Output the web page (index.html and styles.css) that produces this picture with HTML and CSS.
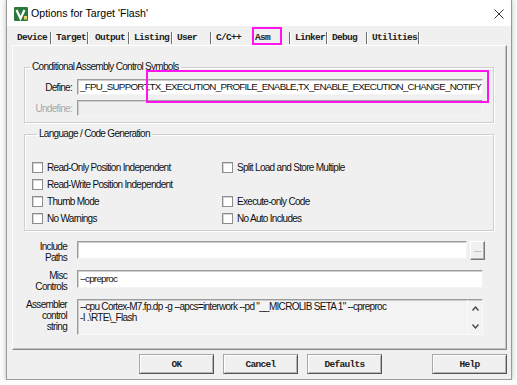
FILE: index.html
```html
<!DOCTYPE html>
<html lang="en">
<head>
  <meta charset="UTF-8" />
  <title>Options for Target 'Flash'</title>
  <link rel="stylesheet" href="styles.css">
</head>
<body>

  <div class="window">
    <div class="titlebar">
      <svg class="app-icon" width="14" height="14" viewBox="0 0 14 14">
        <rect width="14" height="14" rx="1" fill="#2b7a3b"/>
        <path d="M2.5 3 L6.5 11.5 L10.5 3" stroke="#fff" stroke-width="2.2" fill="none"/>
        <rect x="10" y="9" width="3" height="3.5" fill="#e9d36a"/>
      </svg>
      <span class="title">Options for Target 'Flash'</span>
      <svg class="close" width="10" height="10" viewBox="0 0 10 10">
        <path d="M0.5 0.5 L9.5 9.5 M9.5 0.5 L0.5 9.5" stroke="#333" stroke-width="1" fill="none"/>
      </svg>
    </div>

    <div class="tabs">
      <span class="tab">Device</span>
      <span class="tab">Target</span>
      <span class="tab tab-wide">Output</span>
      <span class="tab">Listing</span>
      <span class="tab">User</span>
      <span class="tab tab-plain">C/C++</span>
      <span class="tab tab-active">Asm<span class="mark mark-tab"></span></span>
      <span class="tab">Linker</span>
      <span class="tab">Debug</span>
      <span class="tab">Utilities</span>
    </div>

    <div class="page">
      <fieldset class="group group-symbols">
        <legend>Conditional Assembly Control Symbols</legend>
        <div class="field-row">
          <span class="field-label">Define:</span>
          <div class="input">_FPU_SUPPORT,TX_EXECUTION_PROFILE_ENABLE,TX_ENABLE_EXECUTION_CHANGE_NOTIFY</div>
        </div>
        <div class="field-row disabled">
          <span class="field-label">Undefine:</span>
          <div class="input"></div>
        </div>
      </fieldset>

      <fieldset class="group group-lang">
        <legend>Language / Code Generation</legend>
        <div class="checks">
          <label class="check"><span class="box"></span>Read-Only Position Independent</label>
          <label class="check"><span class="box"></span>Split Load and Store Multiple</label>
          <label class="check"><span class="box"></span>Read-Write Position Independent</label>
          <span></span>
          <label class="check"><span class="box"></span>Thumb Mode</label>
          <label class="check"><span class="box"></span>Execute-only Code</label>
          <label class="check"><span class="box"></span>No Warnings</label>
          <label class="check"><span class="box"></span>No Auto Includes</label>
        </div>
      </fieldset>

      <div class="controls">
        <div class="ctl-row">
          <span class="ctl-label">Include<br>Paths</span>
          <div class="input input-short"></div>
          <span class="browse">...</span>
        </div>
        <div class="ctl-row">
          <span class="ctl-label">Misc<br>Controls</span>
          <div class="input">--cpreproc</div>
        </div>
        <div class="ctl-row">
          <span class="ctl-label">Assembler<br>control<br>string</span>
          <div class="textarea">
            <div class="textarea-text">--cpu Cortex-M7.fp.dp -g --apcs=interwork --pd "__MICROLIB SETA 1" --cpreproc<br>-I .\RTE\_Flash</div>
            <div class="scroll">
              <svg width="7" height="5" viewBox="0 0 7 5"><path d="M0.5 4.5 L3.5 1 L6.5 4.5" stroke="#444" stroke-width="1.3" fill="none"/></svg>
              <svg width="7" height="5" viewBox="0 0 7 5"><path d="M0.5 0.5 L3.5 4 L6.5 0.5" stroke="#444" stroke-width="1.3" fill="none"/></svg>
            </div>
          </div>
        </div>
      </div>

      <div class="mark mark-define"></div>
    </div>

    <div class="buttons">
      <button class="btn btn-ok">OK</button>
      <button class="btn">Cancel</button>
      <button class="btn">Defaults</button>
      <button class="btn btn-help">Help</button>
    </div>
  </div>

</body>
</html>
```

FILE: styles.css
```css
body {
  margin: 0;
  background: #fbfbfb;
  font-family: "Liberation Sans", sans-serif;
  font-size: 10px;
  letter-spacing: -0.7px;
  color: #111;
}

.window {
  box-sizing: border-box;
  width: 506px;
  height: 380px;
  margin-left: 6px;
  background: #f0f0f0;
  border: 1px solid #9a9a9a;
  border-top: none;
  box-shadow: 0 0 5px rgba(0, 0, 0, 0.25);
}

/* title bar */
.titlebar {
  display: flex;
  align-items: center;
  height: 26px;
  background: #fff;
}

.app-icon {
  margin-left: 7px;
  margin-top: 2px;
}

.title {
  margin-left: 3px;
  font-size: 10.6px;
  letter-spacing: 0;
  color: #000;
}

.close {
  margin-left: auto;
  margin-right: 7px;
  margin-top: 1px;
}

/* tab strip */
.tabs {
  box-sizing: border-box;
  display: grid;
  grid-template-columns: 39px 37px 41px 43px 39px 37px 42px 37px 40px 52px;
  height: 19px;
  padding-top: 6px;
  margin-left: 5px;
  font-family: "Liberation Mono", monospace;
  font-weight: bold;
  font-size: 9.5px;
  letter-spacing: -0.7px;
  color: #222;
}

.tab {
  position: relative;
  height: 12px;
  line-height: 12px;
  padding-left: 5px;
  border-right: 1px solid #6e6e6e;
  box-shadow: 1px 0 0 #fff;
  white-space: nowrap;
}

.tab-wide {
  padding-left: 7px;
}

.tab-plain {
  border-right: none;
  box-shadow: none;
}

.tab-active {
  padding-left: 7px;
}

.mark {
  position: absolute;
  box-sizing: border-box;
  border: 2px solid #ff14f0;
}

.mark-tab {
  left: 4px;
  top: -5px;
  width: 30px;
  height: 18px;
}

/* tab page */
.page {
  position: relative;
  box-sizing: border-box;
  width: 495px;
  height: 305px;
  margin-left: 5px;
  border: 1px solid;
  border-color: #fff #8a8a8a #8a8a8a #fff;
  box-shadow: inset -1px -1px 0 #c4c4c4;
}

.mark-define {
  left: 133px;
  top: 24px;
  width: 343px;
  height: 33px;
}

.group {
  box-sizing: border-box;
  width: 470px;
  min-width: 0;
  margin: 0 0 0 11px;
  border: 1px solid #cfcfcf;
  box-shadow: inset 1px 1px 0 #fff, 1px 1px 0 #fff;
}

.group legend {
  margin-left: 5px;
  padding: 0 2px;
  line-height: 12px;
}

.group-symbols {
  margin-top: 15px;
  padding: 6px 10px 6px 0;
}

.group-lang {
  margin-top: 5px;
  padding: 19px 0 3px 7px;
}

.field-row {
  display: grid;
  grid-template-columns: 47px 1fr;
  column-gap: 5px;
  align-items: center;
}

.field-row + .field-row {
  margin-top: 5px;
}

.field-label {
  text-align: right;
}

.disabled .field-label {
  color: #a8a8a8;
}

.input {
  box-sizing: border-box;
  height: 16px;
  line-height: 14px;
  padding-left: 2px;
  font-size: 9.8px;
  letter-spacing: -0.75px;
  background: #fff;
  border: 1px solid;
  border-color: #9c9c9c #f4f4f4 #f4f4f4 #9c9c9c;
  box-shadow: inset 1px 1px 0 #cdcdcd;
  white-space: nowrap;
  overflow: hidden;
}

.disabled .input {
  background: #f0f0f0;
}

/* check boxes */
.checks {
  display: grid;
  grid-template-columns: 190px 1fr;
  grid-auto-rows: 17px;
}

.check {
  display: flex;
  align-items: center;
  white-space: nowrap;
}

.box {
  box-sizing: border-box;
  width: 11px;
  height: 11px;
  margin-right: 4px;
  background: #fff;
  border: 1px solid #8d8d8d;
  box-shadow: inset 1px 1px 0 #d6d6d6;
}

/* lower controls */
.controls {
  margin-top: 10px;
}

.ctl-row {
  display: flex;
  align-items: flex-start;
}

.ctl-row + .ctl-row {
  margin-top: 7px;
}

.ctl-label {
  width: 54px;
  margin-right: 10px;
  text-align: right;
  line-height: 11px;
}

.ctl-row .input {
  width: 406px;
  height: 18px;
  line-height: 16px;
}

.ctl-row .input-short {
  width: 390px;
}

.browse {
  box-sizing: border-box;
  width: 15px;
  height: 19px;
  margin-left: 3px;
  line-height: 14px;
  text-align: center;
  font-size: 9px;
  letter-spacing: 0;
  color: #7a6fb0;
  border: 1px solid;
  border-color: #fff #777 #777 #fff;
  box-shadow: inset -1px -1px 0 #b0b0b0;
}

.textarea {
  box-sizing: border-box;
  display: flex;
  width: 406px;
  height: 36px;
  background: #f3f3f3;
  border: 1px solid;
  border-color: #9c9c9c #f8f8f8 #f8f8f8 #9c9c9c;
  box-shadow: inset 1px 1px 0 #cdcdcd;
}

.textarea-text {
  flex: 1;
  padding: 1px 2px;
  line-height: 11px;
  white-space: nowrap;
  overflow: hidden;
}

.scroll {
  display: flex;
  flex-direction: column;
  justify-content: space-between;
  align-items: center;
  width: 14px;
  padding: 6px 0 5px;
  border-left: 1px solid #fafafa;
}

/* dialog buttons */
.buttons {
  display: flex;
  margin-top: 4px;
}

.btn {
  box-sizing: border-box;
  width: 75px;
  height: 20px;
  margin: 0 0 0 9px;
  padding: 0;
  font-family: "Liberation Mono", monospace;
  font-weight: bold;
  font-size: 9.5px;
  letter-spacing: -0.7px;
  color: #222;
  background: #f0f0f0;
  border: 1px solid;
  border-color: #a8a8a8 #555 #555 #a8a8a8;
  box-shadow: inset 1px 1px 0 #fff, inset -1px -1px 0 #b4b4b4;
}

.btn-ok {
  margin-left: 132px;
}

.btn-help {
  margin-left: auto;
  margin-right: 4px;
}
```
